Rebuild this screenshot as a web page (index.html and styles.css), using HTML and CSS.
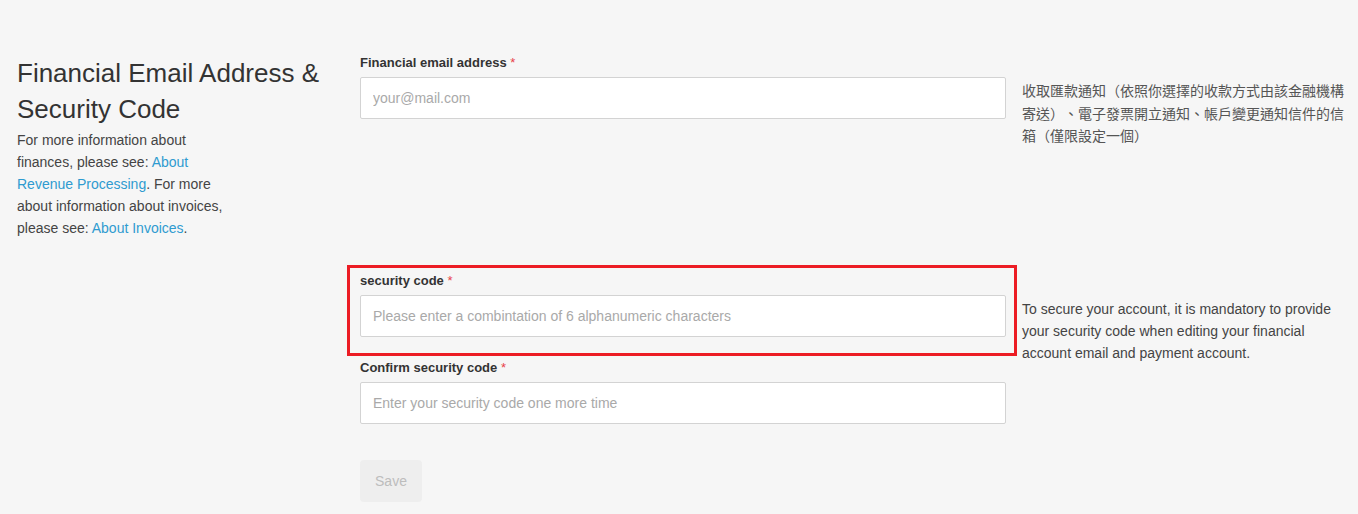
FILE: index.html
```html
<!DOCTYPE html>
<html>
<head>
<meta charset="utf-8">
<link rel="stylesheet" href="styles.css">
</head>
<body>
<div class="page">
  <aside class="intro">
    <h2 class="intro-title">Financial Email Address &amp; Security Code</h2>
    <p class="intro-text">For more information about finances, please see: <a href="#">About Revenue Processing</a>. For more about information about invoices, please see: <a href="#">About Invoices</a>.</p>
  </aside>
  <main class="form">
    <div class="row row-email">
      <div class="fields">
        <div class="field">
          <label class="label">Financial email address <span class="req">*</span></label>
          <input class="input" type="text" placeholder="your@mail.com">
        </div>
      </div>
      <p class="help help-cjk">收取匯款通知（依照你選擇的收款方式由該金融機構寄送）、電子發票開立通知、帳戶變更通知信件的信箱（僅限設定一個）</p>
    </div>
    <div class="row">
      <div class="fields">
        <div class="field field-marked">
          <div class="mark"></div>
          <label class="label">security code <span class="req">*</span></label>
          <input class="input" type="text" placeholder="Please enter a combintation of 6 alphanumeric characters">
        </div>
        <div class="field">
          <label class="label">Confirm security code <span class="req">*</span></label>
          <input class="input" type="text" placeholder="Enter your security code one more time">
        </div>
      </div>
      <p class="help">To secure your account, it is mandatory to provide your security code when editing your financial account email and payment account.</p>
    </div>
    <div class="actions">
      <button class="btn" type="button" disabled>Save</button>
    </div>
  </main>
</div>
</body>
</html>
```
FILE: styles.css
```css
html, body {
  margin: 0;
  padding: 0;
  background: #f6f6f6;
}
body {
  font-family: "Liberation Sans", Arial, "Noto Sans CJK TC", sans-serif;
  color: #444;
}
.page {
  display: flex;
  padding: 55px 0 0 17px;
}
.intro {
  width: 343px;
  flex: none;
}
.intro-title {
  margin: 0;
  font-size: 26px;
  font-weight: normal;
  line-height: 36px;
  color: #333;
  width: 310px;
}
.intro-text {
  margin: 2px 0 0;
  width: 225px;
  font-size: 14px;
  line-height: 22px;
  color: #444;
}
.intro-text a {
  color: #2f9bd0;
  text-decoration: none;
}
.form {
  width: 990px;
}
.row {
  display: flex;
  gap: 16px;
}
.row-email {
  min-height: 218px;
}
.fields {
  width: 646px;
  flex: none;
}
.field {
  margin-bottom: 23px;
  position: relative;
}
.label {
  display: block;
  font-size: 13px;
  font-weight: bold;
  line-height: 16px;
  color: #333;
  margin-bottom: 6px;
}
.req {
  color: #e8414a;
  font-weight: normal;
}
.input {
  display: block;
  box-sizing: border-box;
  width: 646px;
  height: 42px;
  border: 1px solid #d3d3d3;
  border-radius: 2px;
  background: #fff;
  padding: 0 12px;
  font-family: "Liberation Sans", Arial, sans-serif;
  font-size: 14px;
  color: #333;
  outline: none;
}
.input::placeholder {
  color: #a9a9a9;
}
.help {
  margin: 0;
  padding-top: 25px;
  width: 326px;
  font-size: 14px;
  line-height: 22px;
  color: #444;
}
.help-cjk {
  font-family: "Noto Sans CJK TC", "Liberation Sans", sans-serif;
  line-height: 22.5px;
  padding-top: 24px;
  font-size: 14px;
  text-spacing-trim: space-all;
  color: #555;
}
.mark {
  position: absolute;
  left: -13px;
  top: -8px;
  width: 670px;
  height: 91px;
  box-sizing: border-box;
  border: 3px solid #ec1c24;
  pointer-events: none;
}
.actions {
  padding-top: 13px;
}
.btn {
  width: 62px;
  height: 42px;
  border: none;
  border-radius: 4px;
  background: #eeeeee;
  color: #bdbdbd;
  font-family: "Liberation Sans", Arial, sans-serif;
  font-size: 14px;
  padding: 0;
}
```
